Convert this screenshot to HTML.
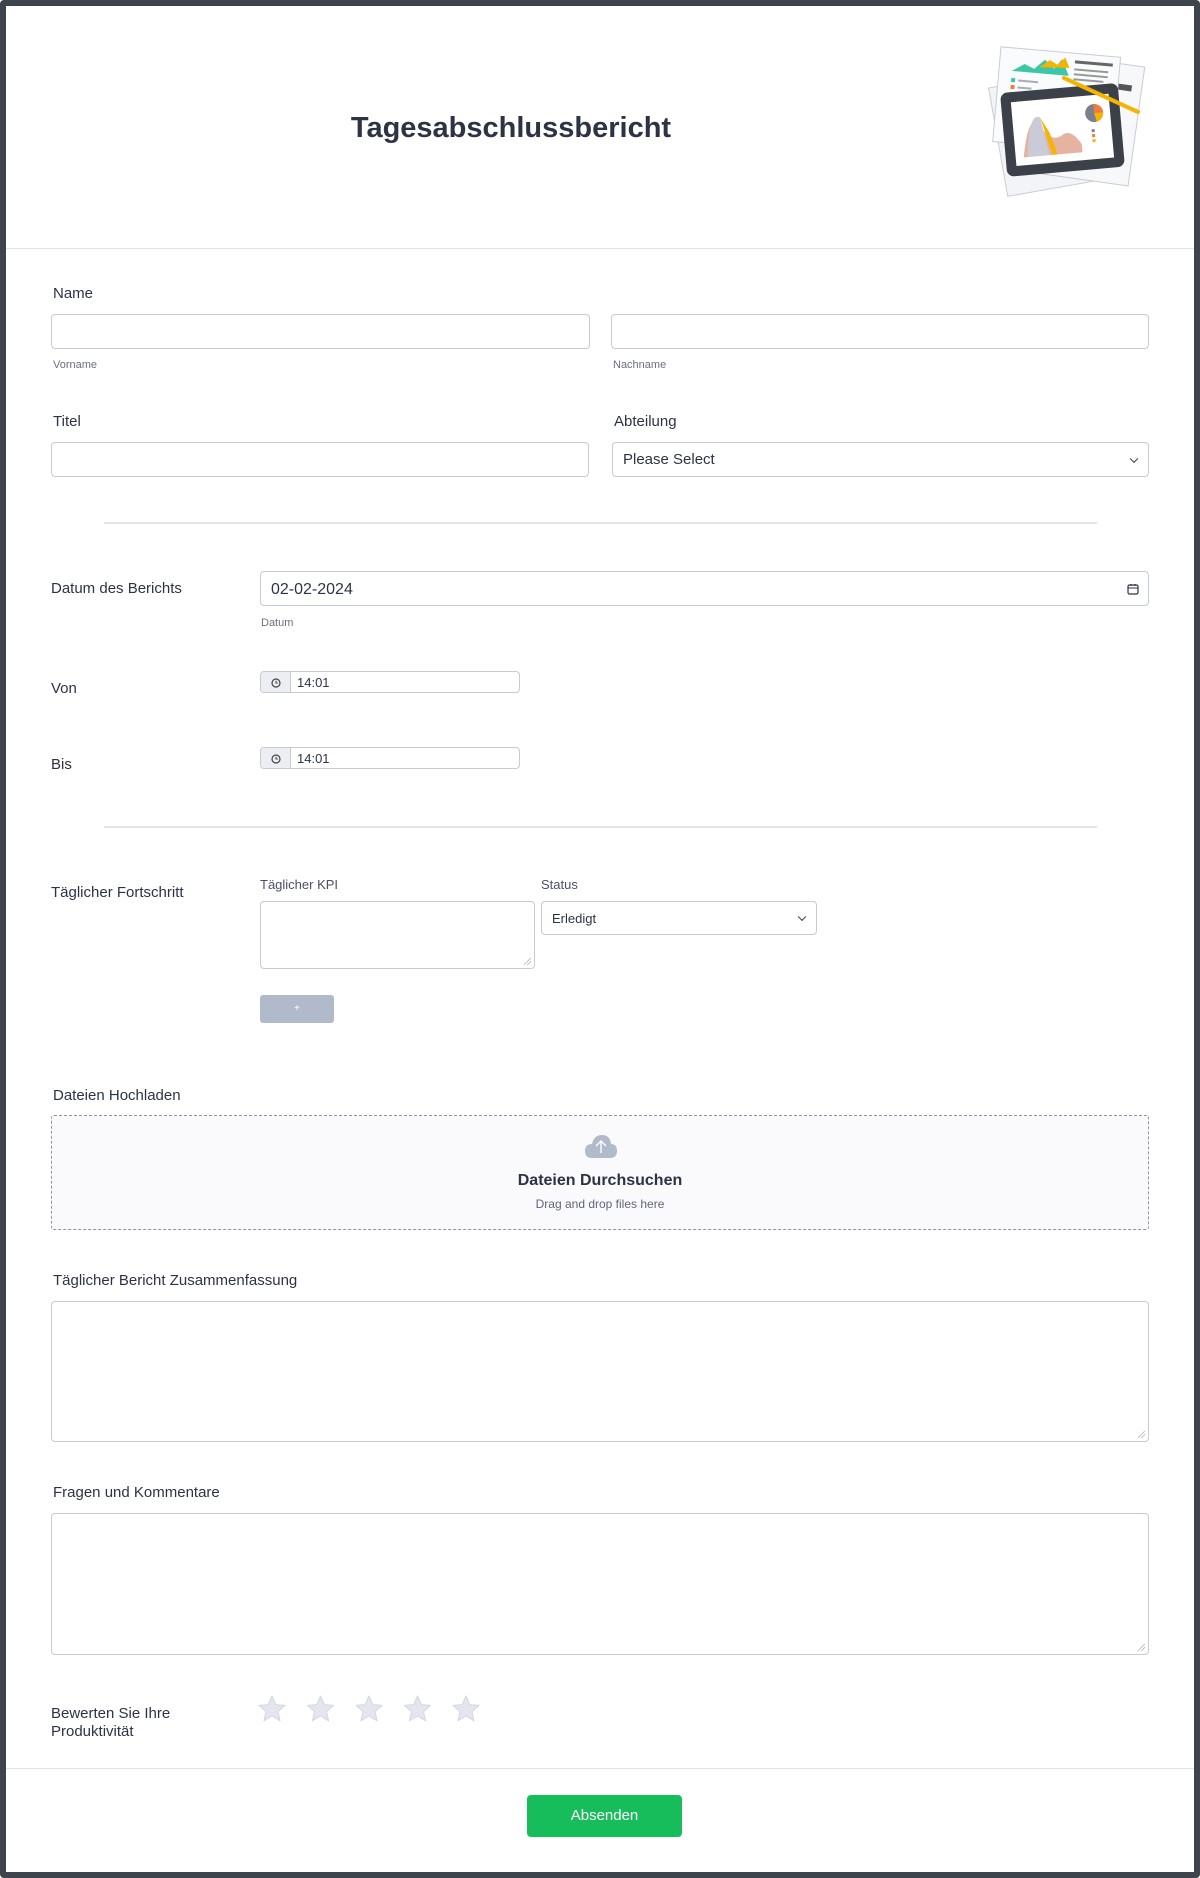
<!DOCTYPE html>
<html><head><meta charset="utf-8">
<style>
*{box-sizing:border-box;margin:0;padding:0}
html,body{width:1200px;height:1878px;background:#fff;font-family:"Liberation Sans",Arial,sans-serif;color:#2c3345;overflow:hidden}
.frame{position:absolute;left:0;top:0;width:1200px;height:1878px;border:6px solid #3e444c;border-radius:4px}
.a{position:absolute}
.lbl{position:absolute;font-size:15px;color:#2c3345}
.sub{position:absolute;font-size:11px;color:#6b7080}
.inp{position:absolute;border:1px solid #c3cad8;border-radius:4px;background:#fff}
.hr{position:absolute;height:2px;background:#e3e5ea}
.sel{font-size:15px;color:#2c3345;padding-left:10px;display:flex;align-items:center}
.chev{position:absolute;right:11px;top:50%;width:6px;height:6px;border-right:1.5px solid #2c3345;border-bottom:1.5px solid #2c3345;transform:translateY(-70%) rotate(45deg)}
.grip{position:absolute;right:3px;bottom:3px;width:7px;height:7px;background:linear-gradient(135deg,transparent 45%,#aab 45%,#aab 52%,transparent 52%,transparent 70%,#aab 70%,#aab 77%,transparent 77%)}
</style></head><body>
<div class="frame"></div>

<div class="a" style="left:6px;top:112px;width:1010px;text-align:center;font-size:29px;font-weight:bold;color:#2c3345">Tagesabschlussbericht</div>

<svg class="a" style="left:976px;top:46px" width="170" height="156" viewBox="0 0 170 156">
 <g transform="rotate(-10 85 78)">
  <rect x="20" y="30" width="120" height="110" fill="#f3f4f7" stroke="#c9ccd6"/>
 </g>
 <g transform="rotate(8 85 78)">
  <rect x="40" y="10" width="120" height="120" fill="#f7f8fa" stroke="#c9ccd6"/>
  <rect x="130" y="30" width="20" height="6" fill="#555"/>
 </g>
 <g transform="rotate(5 70 60)">
  <rect x="20" y="5" width="120" height="95" fill="#fafbfc" stroke="#c9ccd6"/>
  <polygon points="33,28 45,20 55,24 65,14 75,22 82,12 90,28" fill="#3ec6a8"/>
  <polygon points="60,22 70,14 78,18 85,10 90,20" fill="#f4b400"/>
  <rect x="33" y="35" width="4" height="4" fill="#3ec6a8"/><rect x="40" y="36" width="20" height="2" fill="#aab"/>
  <rect x="33" y="42" width="4" height="4" fill="#f07b3f"/><rect x="40" y="43" width="14" height="2" fill="#aab"/>
  <rect x="33" y="49" width="4" height="4" fill="#f4b400"/>
  <rect x="95" y="12" width="38" height="3" fill="#666"/>
  <rect x="95" y="20" width="34" height="2" fill="#999"/><rect x="95" y="25" width="34" height="2" fill="#999"/><rect x="95" y="30" width="30" height="2" fill="#999"/>
 </g>
 <g transform="rotate(-5 85 90)">
  <rect x="28" y="42" width="118" height="84" rx="7" fill="#3c4048"/>
  <rect x="38" y="52" width="98" height="64" fill="#fff"/>
  <path d="M46 108 Q55 60 66 80 Q75 95 85 90 Q95 82 105 100 L105 108Z" fill="#e6b3a0"/>
  <path d="M50 108 Q55 62 66 70 L72 108Z" fill="#c9ccd6"/>
  <path d="M66 70 L75 108 L80 108 L74 86Z" fill="#f4b400"/>
  <circle cx="120" cy="70" r="9" fill="#7b8090"/>
  <path d="M120 70 L120 61 A9 9 0 0 1 129 70Z" fill="#f07b3f"/>
  <path d="M120 70 L129 70 A9 9 0 0 1 122 79Z" fill="#f4b400"/>
  <rect x="116" y="86" width="3" height="3" fill="#7b8090"/><rect x="116" y="91" width="3" height="3" fill="#f07b3f"/><rect x="116" y="96" width="3" height="3" fill="#f4b400"/>
 </g>
 <line x1="88" y1="32" x2="162" y2="66" stroke="#f4b400" stroke-width="4" stroke-linecap="round"/>
</svg>

<div class="hr" style="left:6px;top:248px;width:1188px;height:1px"></div>

<div class="lbl" style="left:53px;top:285px">Name</div>
<div class="inp" style="left:51px;top:314px;width:539px;height:35px"></div>
<div class="inp" style="left:611px;top:314px;width:538px;height:35px"></div>
<div class="sub" style="left:53px;top:359px">Vorname</div>
<div class="sub" style="left:613px;top:359px">Nachname</div>

<div class="lbl" style="left:53px;top:413px">Titel</div>
<div class="lbl" style="left:614px;top:413px">Abteilung</div>
<div class="inp" style="left:51px;top:442px;width:538px;height:35px"></div>
<div class="inp sel" style="left:612px;top:442px;width:537px;height:35px">Please Select<span class="chev"></span></div>

<div class="hr" style="left:104px;top:522px;width:993px"></div>

<div class="lbl" style="left:51px;top:580px">Datum des Berichts</div>
<div class="inp" style="left:260px;top:571px;width:889px;height:35px;font-size:16px;padding:9px 0 0 10px">02-02-2024
 <svg class="a" style="right:9px;top:11px" width="12" height="12" viewBox="0 0 12 12"><rect x="1" y="2" width="10" height="9" rx="1.5" fill="none" stroke="#2c3345" stroke-width="1.2"/><line x1="1" y1="5" x2="11" y2="5" stroke="#2c3345"/><line x1="4" y1="1" x2="4" y2="3" stroke="#2c3345"/><line x1="8" y1="1" x2="8" y2="3" stroke="#2c3345"/></svg>
</div>
<div class="sub" style="left:261px;top:617px">Datum</div>

<div class="lbl" style="left:51px;top:680px">Von</div>
<div class="inp" style="left:260px;top:671px;width:260px;height:22px;overflow:hidden">
 <div class="a" style="left:0;top:0;width:30px;height:22px;background:#eceef2;border-right:1px solid #c3cad8"></div>
 <svg class="a" style="left:10px;top:6px" width="10" height="10" viewBox="0 0 10 10"><circle cx="5" cy="5" r="4" fill="none" stroke="#444" stroke-width="1.2"/><path d="M5 2.8V5H6.8" stroke="#444" fill="none"/></svg>
 <div class="a" style="left:36px;top:3px;font-size:13px">14:01</div>
</div>
<div class="lbl" style="left:51px;top:756px">Bis</div>
<div class="inp" style="left:260px;top:747px;width:260px;height:22px;overflow:hidden">
 <div class="a" style="left:0;top:0;width:30px;height:22px;background:#eceef2;border-right:1px solid #c3cad8"></div>
 <svg class="a" style="left:10px;top:6px" width="10" height="10" viewBox="0 0 10 10"><circle cx="5" cy="5" r="4" fill="none" stroke="#444" stroke-width="1.2"/><path d="M5 2.8V5H6.8" stroke="#444" fill="none"/></svg>
 <div class="a" style="left:36px;top:3px;font-size:13px">14:01</div>
</div>

<div class="hr" style="left:104px;top:826px;width:993px"></div>

<div class="lbl" style="left:51px;top:884px">Täglicher Fortschritt</div>
<div class="sub" style="left:260px;top:877px;font-size:13px;color:#4a5068">Täglicher KPI</div>
<div class="sub" style="left:541px;top:877px;font-size:13px;color:#4a5068">Status</div>
<div class="inp" style="left:260px;top:901px;width:275px;height:68px"><span class="grip"></span></div>
<div class="inp sel" style="left:541px;top:901px;width:276px;height:34px;font-size:13px">Erledigt<span class="chev"></span></div>
<div class="a" style="left:260px;top:995px;width:74px;height:28px;background:#b1bacb;border-radius:3px;color:#fff;font-size:10px;text-align:center;line-height:28px">+</div>

<div class="lbl" style="left:53px;top:1087px">Dateien Hochladen</div>
<div class="a" style="left:51px;top:1115px;width:1098px;height:115px;border:1px dashed #8d93a8;border-radius:3px;background:#fafafc"></div>
<svg class="a" style="left:584px;top:1133px" width="34" height="26" viewBox="0 0 34 26"><path d="M8 25 Q1 25 1 18 Q1 11 8 11 Q10 2 18 2 Q26 2 27 11 Q33 11 33 18 Q33 25 26 25Z" fill="#b1bacb"/><path d="M17 20 L17 8 M12 13 L17 8 L22 13" stroke="#fff" stroke-width="1.4" fill="none"/></svg>
<div class="a" style="left:51px;top:1172px;width:1098px;text-align:center;font-size:16px;font-weight:bold;color:#2c3345">Dateien Durchsuchen</div>
<div class="a" style="left:51px;top:1197px;width:1098px;text-align:center;font-size:12px;color:#60657a">Drag and drop files here</div>

<div class="lbl" style="left:53px;top:1272px">Täglicher Bericht Zusammenfassung</div>
<div class="inp" style="left:51px;top:1301px;width:1098px;height:141px"><span class="grip"></span></div>

<div class="lbl" style="left:53px;top:1484px">Fragen und Kommentare</div>
<div class="inp" style="left:51px;top:1513px;width:1098px;height:142px"><span class="grip"></span></div>

<div class="lbl" style="left:51px;top:1705px;line-height:18px">Bewerten Sie Ihre<br>Produktivität</div>
<svg class="a" style="left:258px;top:1695px" width="230" height="30" viewBox="0 0 230 30">
 <defs><path id="s" d="M14 1 L17.8 9.6 L27 10.4 L20 16.6 L22.1 25.8 L14 21 L5.9 25.8 L8 16.6 L1 10.4 L10.2 9.6Z" fill="#e3e6ee" stroke="#d3d7e2" stroke-linejoin="round"/></defs>
 <use href="#s" x="0"/><use href="#s" x="48.5"/><use href="#s" x="97"/><use href="#s" x="145.5"/><use href="#s" x="194"/>
</svg>

<div class="hr" style="left:6px;top:1768px;width:1188px;height:1px"></div>
<div class="a" style="left:527px;top:1795px;width:155px;height:42px;background:#18bd5b;border-radius:4px;color:#fff;font-size:15px;text-align:center;line-height:42px">Absenden</div>
</body></html>
